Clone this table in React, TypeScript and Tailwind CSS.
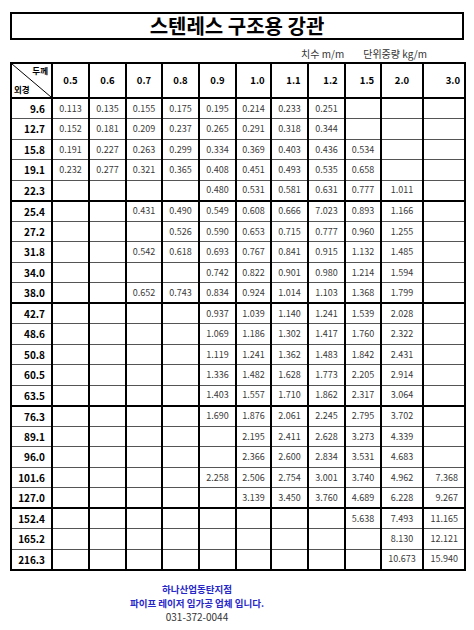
import React from "react"

const cols = ["0.5", "0.6", "0.7", "0.8", "0.9", "1.0", "1.1", "1.2", "1.5", "2.0", "3.0"]

// column widths in px: 외경 column first, then one per thickness
const widths = [41, 37, 37, 36, 37, 37, 35, 37, 37, 36, 42, 42]

const rows: [string, string[]][] = [
  ["9.6", ["0.113", "0.135", "0.155", "0.175", "0.195", "0.214", "0.233", "0.251", "", "", ""]],
  ["12.7", ["0.152", "0.181", "0.209", "0.237", "0.265", "0.291", "0.318", "0.344", "", "", ""]],
  ["15.8", ["0.191", "0.227", "0.263", "0.299", "0.334", "0.369", "0.403", "0.436", "0.534", "", ""]],
  ["19.1", ["0.232", "0.277", "0.321", "0.365", "0.408", "0.451", "0.493", "0.535", "0.658", "", ""]],
  ["22.3", ["", "", "", "", "0.480", "0.531", "0.581", "0.631", "0.777", "1.011", ""]],
  ["25.4", ["", "", "0.431", "0.490", "0.549", "0.608", "0.666", "7.023", "0.893", "1.166", ""]],
  ["27.2", ["", "", "", "0.526", "0.590", "0.653", "0.715", "0.777", "0.960", "1.255", ""]],
  ["31.8", ["", "", "0.542", "0.618", "0.693", "0.767", "0.841", "0.915", "1.132", "1.485", ""]],
  ["34.0", ["", "", "", "", "0.742", "0.822", "0.901", "0.980", "1.214", "1.594", ""]],
  ["38.0", ["", "", "0.652", "0.743", "0.834", "0.924", "1.014", "1.103", "1.368", "1.799", ""]],
  ["42.7", ["", "", "", "", "0.937", "1.039", "1.140", "1.241", "1.539", "2.028", ""]],
  ["48.6", ["", "", "", "", "1.069", "1.186", "1.302", "1.417", "1.760", "2.322", ""]],
  ["50.8", ["", "", "", "", "1.119", "1.241", "1.362", "1.483", "1.842", "2.431", ""]],
  ["60.5", ["", "", "", "", "1.336", "1.482", "1.628", "1.773", "2.205", "2.914", ""]],
  ["63.5", ["", "", "", "", "1.403", "1.557", "1.710", "1.862", "2.317", "3.064", ""]],
  ["76.3", ["", "", "", "", "1.690", "1.876", "2.061", "2.245", "2.795", "3.702", ""]],
  ["89.1", ["", "", "", "", "", "2.195", "2.411", "2.628", "3.273", "4.339", ""]],
  ["96.0", ["", "", "", "", "", "2.366", "2.600", "2.834", "3.531", "4.683", ""]],
  ["101.6", ["", "", "", "", "2.258", "2.506", "2.754", "3.001", "3.740", "4.962", "7.368"]],
  ["127.0", ["", "", "", "", "", "3.139", "3.450", "3.760", "4.689", "6.228", "9.267"]],
  ["152.4", ["", "", "", "", "", "", "", "", "5.638", "7.493", "11.165"]],
  ["165.2", ["", "", "", "", "", "", "", "", "", "8.130", "12.121"]],
  ["216.3", ["", "", "", "", "", "", "", "", "", "10.673", "15.940"]],
]

// a heavy line closes each group of five
const groupEnds = [4, 9, 14, 19]

export default function App() {
  return (
    <div className="min-h-screen bg-white px-[10px] pt-[12px] text-black" style={{ fontFamily: '"Noto Sans CJK KR", "Noto Sans", sans-serif' }}>
      <div className="flex h-[28px] items-center justify-center border-2 border-black">
        <h1 className="text-[20px] font-bold leading-none">스텐레스 구조용 강관</h1>
      </div>

      <div className="mt-[8px] flex h-[12px] items-center justify-end gap-[19px] pr-[37px] text-[10px] leading-[12px] text-[#333]">
        <span>치수 m/m</span>
        <span>단위중량 kg/m</span>
      </div>

      <table className="mt-[2px] w-full table-fixed border-collapse border-2 border-black">
        <colgroup>
          {widths.map((w, i) => (
            <col key={i} style={{ width: w }} />
          ))}
        </colgroup>
        <thead>
          <tr className="h-[35px]">
            <th className="relative border-2 border-black p-0">
              <svg className="absolute inset-0 h-full w-full" preserveAspectRatio="none" viewBox="0 0 100 100">
                <line x1="0" y1="0" x2="100" y2="100" stroke="#000" strokeWidth="1" vectorEffect="non-scaling-stroke" />
              </svg>
              <span className="absolute right-[3px] top-[2px] text-[8.5px] font-bold leading-none">두께</span>
              <span className="absolute bottom-[4px] left-[2px] text-[8.5px] font-bold leading-none">외경</span>
            </th>
            {cols.map((c, i) => (
              <th
                key={c}
                className={
                  "border-2 border-black p-0 text-[9.5px] font-bold " +
                  (i === 10 ? "pr-[4px] text-right" : i >= 5 && i <= 8 ? "pl-[8px] text-center" : "text-center")
                }
              >
                {c}
              </th>
            ))}
          </tr>
        </thead>
        <tbody>
          {rows.map(([od, vals], r) => {
            const heavy = groupEnds.includes(r)
            const bottom = heavy ? "border-b-2 border-b-black" : "border-b border-b-[#555]"
            return (
              <tr key={od} className="h-[20.5px]">
                <td className={"border-x-2 border-x-black p-0 pr-[6px] text-right text-[10px] font-bold " + bottom}>{od}</td>
                {vals.map((v, i) => (
                  <td
                    key={i}
                    className={
                      "border-x-2 border-x-black p-0 text-[9px] text-[#3a3a3a] " +
                      (i === 10 ? "pr-[6px] text-right " : "text-center ") +
                      bottom
                    }
                  >
                    {v}
                  </td>
                ))}
              </tr>
            )
          })}
        </tbody>
      </table>

      <div className="mt-[11px] flex flex-col items-center pr-[80px] leading-[14px]">
        <span className="text-[9.5px] font-bold text-[#2727c9]">하나산업동탄지점</span>
        <span className="text-[9.5px] font-bold text-[#2727c9]">파이프 레이저 임가공 업체 입니다.</span>
        <span className="text-[10px] text-[#333]">031-372-0044</span>
      </div>
    </div>
  )
}
